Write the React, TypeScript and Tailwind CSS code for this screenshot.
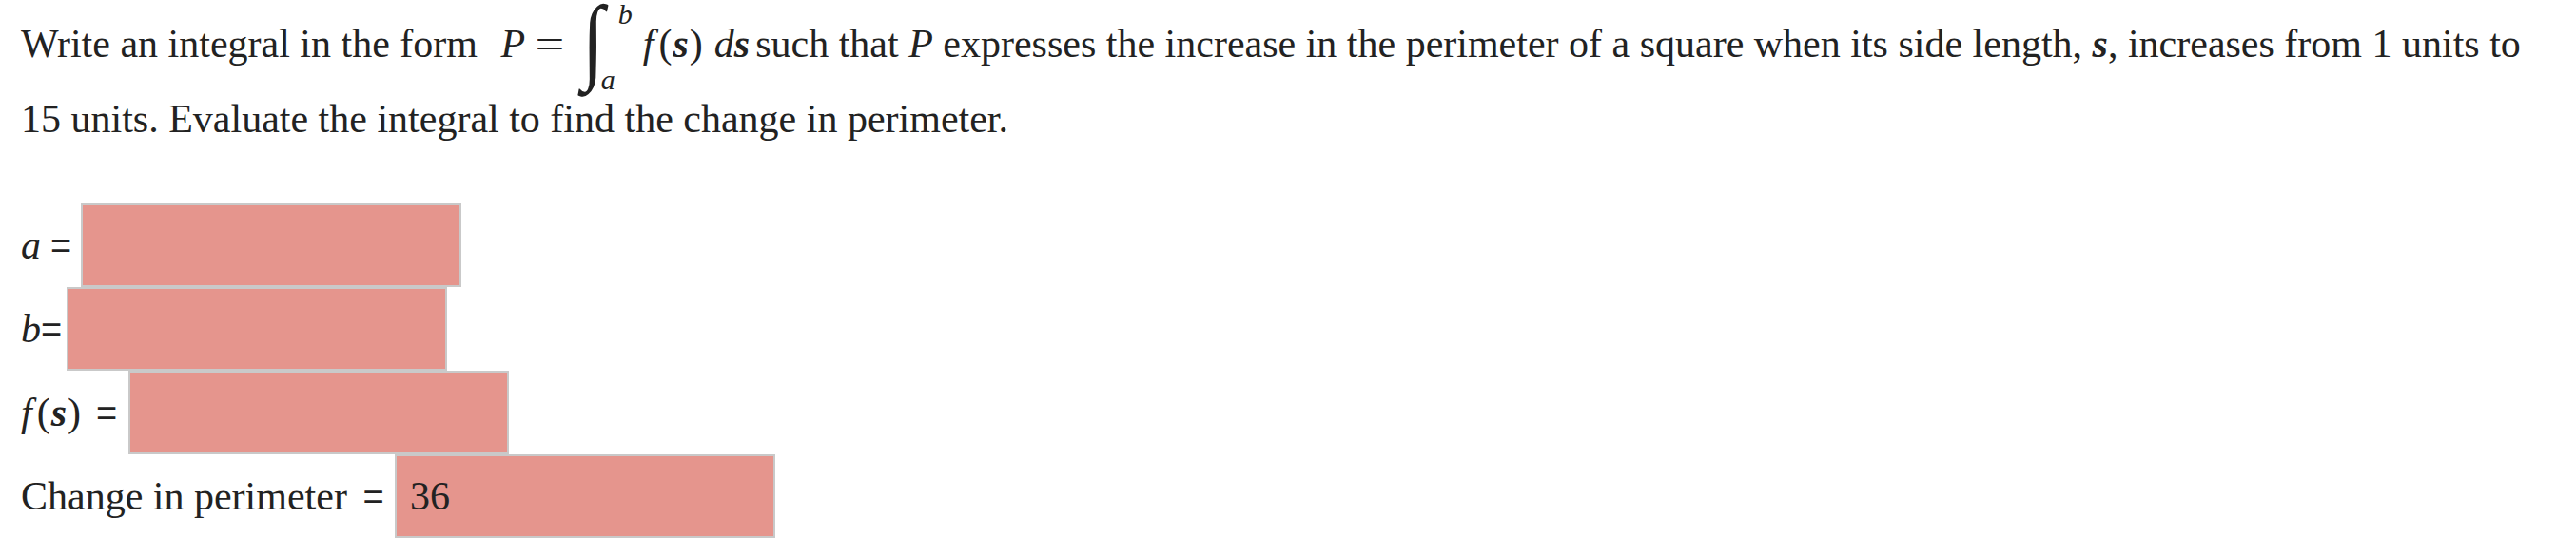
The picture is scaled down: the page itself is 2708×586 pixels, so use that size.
const serif = "font-['Liberation_Serif',serif]";

function Field({ value = '' }: { value?: string }) {
  return (
    <input
      readOnly
      value={value}
      className={`w-[400px] h-[88px] border-2 border-[#c9c9c9] bg-[#e5958d] px-[14px] text-[42px] text-[#222] outline-none ${serif}`}
    />
  );
}

function Eq({ className = '' }: { className?: string }) {
  return <span className={`font-['Liberation_Sans',sans-serif] text-[38px] ${className}`}>=</span>;
}

// f(s) as MathJax sets it: italic f with a little room before the paren
function Fs() {
  return (
    <>
      <i>f</i>
      <span className="ml-[5px]">(</span>
      <b className="mx-[1px]">
        <i>s</i>
      </b>
      )
    </>
  );
}

export default function App() {
  return (
    <div className={`min-h-screen bg-white pl-[22px] text-[#222] text-[42px] ${serif}`}>
      {/* question text */}
      <div className="leading-[50px] whitespace-nowrap">
        Write an integral in the form{' '}
        <i className="ml-[14px]">P</i>
        <span className="mx-[14px] inline-block scale-x-[1.3]">=</span>
        <span className="relative inline-block align-[-35px] w-[62px] h-[95px]">
          <span className="absolute left-[6px] top-[-23px] text-[100px] leading-[130px] italic scale-x-[0.85]">∫</span>
          <i className="absolute left-[46px] top-0 text-[30px] leading-none">b</i>
          <i className="absolute left-[28px] bottom-[-4px] text-[30px] leading-none">a</i>
        </span>
        <span className="ml-[10px]">
          <Fs />
        </span>
        <i className="ml-[12px]">d</i>
        <b>
          <i>s</i>
        </b>
        <span className="ml-[6px]">such that</span> <i>P</i> expresses the increase in the perimeter of a square
        when its side length,{' '}
        <b>
          <i>s</i>
        </b>
        , increases from 1 units to
      </div>
      <div className="leading-[61px]">15 units. Evaluate the integral to find the change in perimeter.</div>

      {/* answer rows */}
      <div className="mt-[58px] flex flex-col">
        <div className="flex items-baseline">
          <span className="w-[63px] whitespace-nowrap">
            <i>a</i>
            <Eq className="ml-[10px]" />
          </span>
          <Field />
        </div>
        <div className="flex items-baseline">
          <span className="w-[48px] whitespace-nowrap">
            <i>b</i>
            <Eq />
          </span>
          <Field />
        </div>
        <div className="flex items-baseline">
          <span className="w-[113px] whitespace-nowrap">
            <Fs />
            <Eq className="ml-[16px]" />
          </span>
          <Field />
        </div>
        <div className="flex items-baseline">
          <span className="w-[393px] whitespace-nowrap">
            Change in perimeter <Eq className="ml-[6px]" />
          </span>
          <Field value="36" />
        </div>
      </div>
    </div>
  );
}
